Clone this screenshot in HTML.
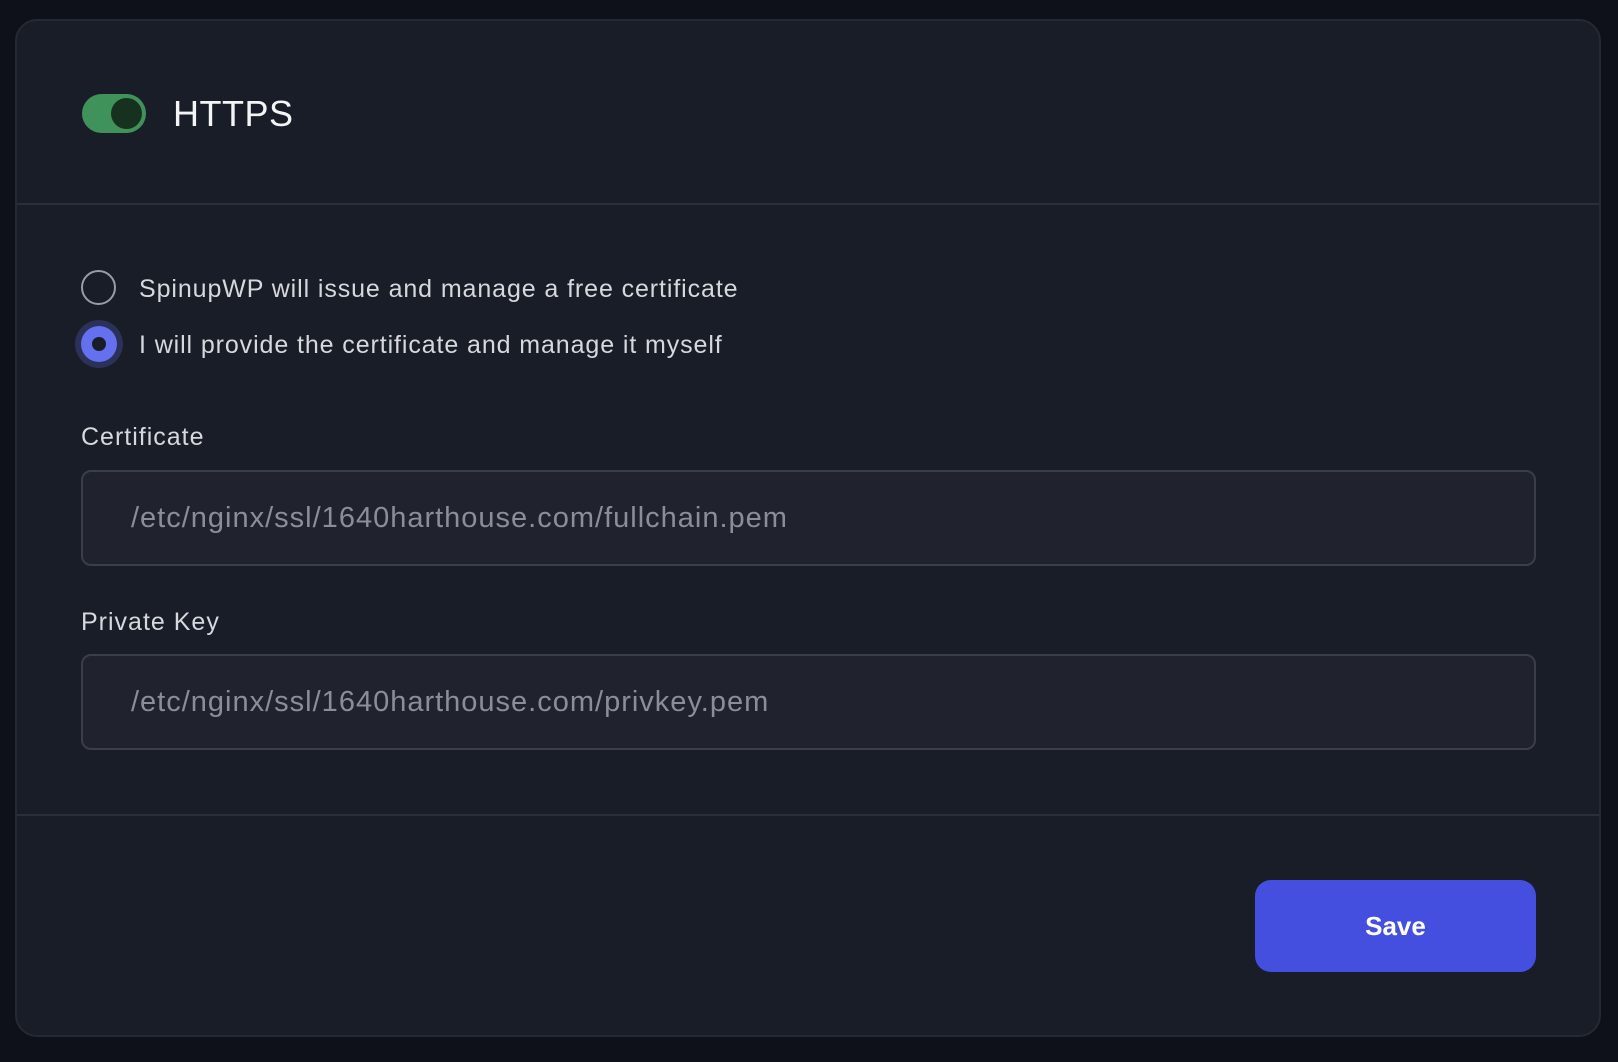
<!DOCTYPE html>
<html><head><style>
*{box-sizing:border-box;margin:0;padding:0}
body{width:1618px;height:1062px;background:#0e111a;font-family:"Liberation Sans",sans-serif;position:relative;overflow:hidden}
.card{position:absolute;left:15px;top:19px;width:1586px;height:1018px;background:#191d27;border:2px solid #252934;border-radius:22px}
.abs{position:absolute}
.div{position:absolute;left:0;right:0;height:2px;background:#2a2e39}
.toggle{left:65px;top:73px;width:64px;height:39px;border-radius:20px;background:#3f935a}
.knob{position:absolute;right:4px;top:4px;width:31px;height:31px;border-radius:50%;background:#16321f}
.title{left:156px;top:69px;font-size:36px;color:#f3f4f6;line-height:48px;letter-spacing:0.5px}
.rtext{font-size:25px;color:#d6d8de;line-height:30px;letter-spacing:0.9px}
.label{font-size:25px;color:#d6d8de;line-height:30px;letter-spacing:1px}
.input{left:64px;width:1455px;height:96px;border:2px solid #3a3e49;border-radius:10px;background:#20232e;color:#8a8e98;font-size:29px;padding-left:48px;line-height:92px;letter-spacing:1px}
.btn{left:1238px;top:859px;width:281px;height:92px;border-radius:16px;background:#454fdf;color:#fff;font-weight:bold;font-size:26px;text-align:center;line-height:92px}
</style></head><body>
<div class="card">
<div class="abs toggle"><div class="knob"></div></div>
<div class="abs title">HTTPS</div>
<div class="div" style="top:182px"></div>
<div class="abs" style="left:64px;top:249px;width:35px;height:35px;border-radius:50%;border:2px solid #9a9ca3"></div>
<div class="abs rtext" style="left:122px;top:253px">SpinupWP will issue and manage a free certificate</div>
<div class="abs" style="left:58px;top:299px;width:48px;height:48px;border-radius:50%;background:#2b3158"></div>
<div class="abs" style="left:64px;top:305px;width:36px;height:36px;border-radius:50%;background:#6470ee"></div>
<div class="abs" style="left:75px;top:316px;width:14px;height:14px;border-radius:50%;background:#191d27"></div>
<div class="abs rtext" style="left:122px;top:309px">I will provide the certificate and manage it myself</div>
<div class="abs label" style="left:64px;top:401px">Certificate</div>
<div class="abs input" style="top:449px">/etc/nginx/ssl/1640harthouse.com/fullchain.pem</div>
<div class="abs label" style="left:64px;top:586px">Private Key</div>
<div class="abs input" style="top:633px">/etc/nginx/ssl/1640harthouse.com/privkey.pem</div>
<div class="div" style="top:793px"></div>
<div class="abs btn">Save</div>
</div>
</body></html>
